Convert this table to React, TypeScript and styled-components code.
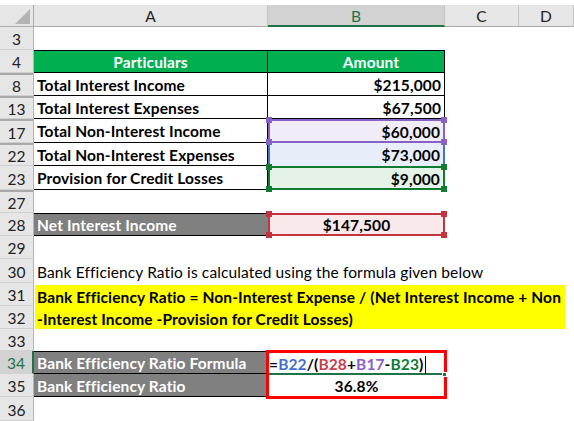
import React from 'react';
import styled, { createGlobalStyle, css } from 'styled-components';

const GlobalStyle = createGlobalStyle`
  *, *::before, *::after { box-sizing: border-box; }
  html, body { margin: 0; padding: 0; background: #fff; overflow: hidden; }
  body { font-family: Lato, "Liberation Sans", sans-serif; }
`;

const ROWS = [3, 4, 8, 13, 17, 22, 23, 27, 28, 29, 30, 31, 32, 33, 34, 35, 36];
const HEIGHTS = [23, 23, 23, 23, 24, 23, 24, 23, 23, 23, 24, 23, 23, 22, 23, 23, 24];
const GAP_ABOVE = new Set([8, 13, 17, 22, 27]);
const gr = (n: number) => ROWS.indexOf(n) + 2;

const Sheet = styled.div`
  display: grid;
  grid-template-columns: 34px 234px 177px 74px 1fr;
  grid-template-rows: 27px ${HEIGHTS.map((h) => `${h}px`).join(' ')};
  width: 574px;
  height: 421px;
  font-size: 15.5px;
  letter-spacing: 0.12px;
  color: #000;
`;

const Corner = styled.div`
  grid-row: 1;
  grid-column: 1;
  margin-top: 5px;
  background: #e6e6e6;
  border-right: 1px solid #ababab;
  border-bottom: 1px solid #ababab;
  display: flex;
`;

const HeadCell = styled.div<{ $col: number; $selected?: boolean }>`
  grid-row: 1;
  grid-column: ${(p) => p.$col};
  margin-top: 5px;
  display: flex;
  align-items: center;
  justify-content: center;
  padding-top: 1px;
  background: ${(p) => (p.$selected ? '#d2d2d2' : '#e6e6e6')};
  color: ${(p) => (p.$selected ? '#217346' : '#222')};
  border-bottom: ${(p) => (p.$selected ? '2px solid #217346' : '1px solid #ababab')};
  border-right: 1px solid #c4c4c4;
`;

const RowHead = styled.div<{ $row: number; $selected?: boolean; $gap?: boolean }>`
  grid-column: 1;
  grid-row: ${(p) => p.$row};
  display: flex;
  align-items: center;
  justify-content: center;
  padding-top: 2px;
  background: ${(p) => (p.$selected ? '#d2d2d2' : '#e6e6e6')};
  color: ${(p) => (p.$selected ? '#217346' : '#222')};
  border-bottom: 1px solid #d0d0d0;
  border-top: ${(p) => (p.$gap ? '2px solid #a9a9a9' : 'none')};
  border-right: ${(p) => (p.$selected ? '2px solid #217346' : '1px solid #b5b5b5')};
`;

const Cell = styled.div<{ $row: number; $col: number | string }>`
  grid-row: ${(p) => p.$row};
  grid-column: ${(p) => p.$col};
  display: flex;
  align-items: center;
  white-space: nowrap;
  min-width: 0;
  padding: 1px 3px 0;
`;

const TableHead = styled(Cell)<{ $shift?: number }>`
  background: #00b050;
  color: #fff;
  font-weight: 700;
  justify-content: center;
  padding-left: ${(p) => p.$shift ?? 3}px;
  border-top: 1px solid #000;
  border-bottom: 1px solid #000;
  border-right: 1px solid #000;
`;

const Label = styled(Cell)`
  font-weight: 700;
  border-bottom: 1px solid #000;
  border-right: 1px solid #000;
`;

const Amount = styled(Cell)`
  font-weight: 700;
  justify-content: flex-end;
  border-bottom: 1px solid #000;
  border-right: 1px solid #000;
`;

type Tone = 'purple' | 'blue' | 'green' | 'red';
const TONES: Record<Tone, { line: string; fill: string }> = {
  purple: { line: '#8562c4', fill: '#f0edf8' },
  blue: { line: '#4472c4', fill: '#e8eef9' },
  green: { line: '#107c2f', fill: '#e5f2e7' },
  red: { line: '#c4343f', fill: '#f9e9ea' },
};

const RefCell = styled(Cell)<{ $tone: Tone; $center?: boolean; $open?: boolean }>`
  position: relative;
  font-weight: 700;
  justify-content: ${(p) => (p.$center ? 'center' : 'flex-end')};
  background: ${(p) => TONES[p.$tone].fill};
  border: 2px solid ${(p) => TONES[p.$tone].line};
  ${(p) =>
    p.$open &&
    css`
      border-top: none;
      border-bottom: none;
    `}
`;

const Handle = styled.span<{ $tone: Tone; $v: 'top' | 'bottom'; $h: 'left' | 'right' }>`
  position: absolute;
  width: 6px;
  height: 6px;
  background: ${(p) => TONES[p.$tone].line};
  ${(p) => p.$v}: -4px;
  ${(p) => p.$h}: -4px;
  z-index: 3;
`;

const DarkLabel = styled(Cell)<{ $bottomOnly?: boolean }>`
  background: #808080;
  color: #fff;
  font-weight: 700;
  border-bottom: 1px solid #000;
  border-top: ${(p) => (p.$bottomOnly ? 'none' : '1px solid #000')};
`;

const Note = styled(Cell)`
  overflow: visible;
`;

const Banner = styled.div`
  grid-row: ${gr(31)} / span 2;
  grid-column: 2 / 6;
  margin: 2px 9px 0 1px;
  background: #ffff00;
  font-weight: 700;
  display: flex;
  flex-direction: column;
  white-space: nowrap;
  padding: 0 2px;
`;

const BannerLine = styled.span`
  height: 22px;
  display: flex;
  align-items: center;
  padding-top: 1px;
`;

const FormulaBox = styled.div`
  grid-row: ${gr(34)} / span 2;
  grid-column: 3;
  margin: -1px -2px -2px -2px;
  border: 3px solid #ff0000;
  background: #fff;
  z-index: 2;
  display: flex;
  flex-direction: column;
  font-weight: 700;
`;

const FormulaLine = styled.div`
  position: relative;
  height: 22px;
  display: flex;
  align-items: center;
  padding-top: 1px;
  border-bottom: 2px solid #217346;
  white-space: nowrap;
`;

const LineHandle = styled.span`
  position: absolute;
  right: -3px;
  bottom: -4px;
  width: 5px;
  height: 5px;
  background: #217346;
  border: 1px solid #fff;
`;

const Ref = styled.span<{ $c: string }>`
  color: ${(p) => p.$c};
`;

const Caret = styled.span`
  display: inline-block;
  width: 1px;
  height: 18px;
  margin-left: 2px;
  margin-top: 2px;
  background: #000;
`;

const Result = styled.div`
  flex: 1;
  display: flex;
  align-items: center;
  justify-content: center;
  padding-top: 1px;
`;

export default function App() {
  return (
    <>
      <GlobalStyle />
      <Sheet>
        <Corner>
          <svg width="33" height="21" viewBox="0 0 33 21">
            <polygon points="15,19 30,19 30,4" fill="#b4b4b4" />
          </svg>
        </Corner>
        <HeadCell $col={2}>A</HeadCell>
        <HeadCell $col={3} $selected>B</HeadCell>
        <HeadCell $col={4}>C</HeadCell>
        <HeadCell $col={5}>D</HeadCell>

        {ROWS.map((n) => (
          <RowHead key={n} $row={gr(n)} $selected={n === 34} $gap={GAP_ABOVE.has(n)}>
            {n}
          </RowHead>
        ))}

        <TableHead $row={gr(4)} $col={2}>Particulars</TableHead>
        <TableHead $row={gr(4)} $col={3} $shift={33}>Amount</TableHead>

        <Label $row={gr(8)} $col={2}>Total Interest Income</Label>
        <Amount $row={gr(8)} $col={3}>$215,000</Amount>
        <Label $row={gr(13)} $col={2}>Total Interest Expenses</Label>
        <Amount $row={gr(13)} $col={3}>$67,500</Amount>
        <Label $row={gr(17)} $col={2}>Total Non-Interest Income</Label>
        <RefCell $row={gr(17)} $col={3} $tone="purple">
          $60,000
          <Handle $tone="purple" $v="top" $h="left" />
          <Handle $tone="purple" $v="top" $h="right" />
          <Handle $tone="purple" $v="bottom" $h="left" />
          <Handle $tone="purple" $v="bottom" $h="right" />
        </RefCell>
        <Label $row={gr(22)} $col={2}>Total Non-Interest Expenses</Label>
        <RefCell $row={gr(22)} $col={3} $tone="blue" $open>
          $73,000
        </RefCell>
        <Label $row={gr(23)} $col={2}>Provision for Credit Losses</Label>
        <RefCell $row={gr(23)} $col={3} $tone="green">
          $9,000
          <Handle $tone="green" $v="top" $h="left" />
          <Handle $tone="green" $v="top" $h="right" />
          <Handle $tone="green" $v="bottom" $h="left" />
          <Handle $tone="green" $v="bottom" $h="right" />
        </RefCell>

        <DarkLabel $row={gr(28)} $col={2}>Net Interest Income</DarkLabel>
        <RefCell $row={gr(28)} $col={3} $tone="red" $center>
          $147,500
          <Handle $tone="red" $v="top" $h="left" />
          <Handle $tone="red" $v="top" $h="right" />
          <Handle $tone="red" $v="bottom" $h="left" />
          <Handle $tone="red" $v="bottom" $h="right" />
        </RefCell>

        <Note $row={gr(30)} $col={2}>
          Bank Efficiency Ratio is calculated using the formula given below
        </Note>

        <Banner>
          <BannerLine>
            Bank Efficiency Ratio = Non-Interest Expense / (Net Interest Income + Non
          </BannerLine>
          <BannerLine>-Interest Income -Provision for Credit Losses)</BannerLine>
        </Banner>

        <DarkLabel $row={gr(34)} $col={2}>Bank Efficiency Ratio Formula</DarkLabel>
        <DarkLabel $row={gr(35)} $col={2} $bottomOnly>Bank Efficiency Ratio</DarkLabel>

        <FormulaBox>
          <FormulaLine>
            =<Ref $c="#3f6fd0">B22</Ref>/(<Ref $c="#c73e48">B28</Ref>+
            <Ref $c="#8a5fc8">B17</Ref>-<Ref $c="#0a7d33">B23</Ref>)
            <Caret />
            <LineHandle />
          </FormulaLine>
          <Result>36.8%</Result>
        </FormulaBox>
      </Sheet>
    </>
  );
}
